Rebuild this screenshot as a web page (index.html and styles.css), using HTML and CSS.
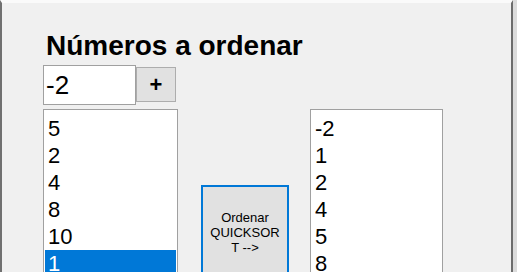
FILE: index.html
```html
<!DOCTYPE html>
<html lang="es">
<head>
    <meta charset="UTF-8">
    <meta name="viewport" content="width=device-width, initial-scale=1.0">
    <title>Quicksort</title>
    <link rel="stylesheet" href="styles.css">
</head>
<body>
    <div class="window">
        <div class="content">
            <h1 class="title">Números a ordenar</h1>

            <div class="entry-row">
                <input type="text" id="numberInput" class="number-input" value="-2">
                <button type="button" class="add-button">+</button>
            </div>

            <div class="sort-area">
                <ul class="listbox listbox-input">
                    <li>5</li>
                    <li>2</li>
                    <li>4</li>
                    <li>8</li>
                    <li>10</li>
                    <li class="selected">1</li>
                </ul>

                <button type="button" class="sort-button">Ordenar QUICKSORT --&gt;</button>

                <ul class="listbox listbox-output">
                    <li>-2</li>
                    <li>1</li>
                    <li>2</li>
                    <li>4</li>
                    <li>5</li>
                    <li>8</li>
                </ul>
            </div>
        </div>
    </div>
</body>
</html>
```

FILE: styles.css
```css
* {
    margin: 0;
    padding: 0;
    box-sizing: border-box;
    font-family: 'Liberation Sans', Arial, sans-serif;
}

body {
    background-color: #dcdcdc;
    height: 272px;
    overflow: hidden;
}

.window {
    width: 513px;
    height: 272px;
    background-color: #f0f0f0;
    border-top: 3px solid #fafafa;
    border-left: 2px solid #707070;
    border-right: 2px solid #6d6d6d;
}

.content {
    padding: 27px 0 0 41px;
}

.title {
    font-size: 28px;
    line-height: 32px;
    font-weight: 700;
    color: #000;
    margin: 0 0 3px 3px;
}

.entry-row {
    display: flex;
    align-items: flex-start;
}

.number-input {
    width: 93px;
    height: 40px;
    border: 1px solid #a0a0a0;
    padding: 0 2px;
    font-size: 26px;
    color: #000;
    background-color: white;
    outline: none;
}

.add-button {
    width: 40px;
    height: 35px;
    margin-top: 2px;
    border: 1px solid #adadad;
    background-color: #e1e1e1;
    font-size: 22px;
    font-weight: 700;
    color: #000;
}

.sort-area {
    display: flex;
    align-items: flex-start;
    margin-top: 4px;
}

.listbox {
    list-style: none;
    height: 200px;
    background-color: white;
    border: 1px solid #a0a0a0;
    padding: 5px 1px 0 1px;
}

.listbox li {
    height: 27px;
    line-height: 27px;
    font-size: 22px;
    padding-left: 3px;
    color: #000;
}

.listbox li.selected {
    background-color: #0078d7;
    color: white;
}

.listbox-input {
    width: 135px;
}

.listbox-output {
    width: 133px;
    margin-left: 21px;
}

.sort-button {
    width: 88px;
    height: 94px;
    margin: 76px 0 0 23px;
    padding: 0 5px;
    border: 2px solid #0078d7;
    background-color: #e1e1e1;
    font-size: 13px;
    line-height: 15px;
    color: #000;
    overflow-wrap: anywhere;
}
```
